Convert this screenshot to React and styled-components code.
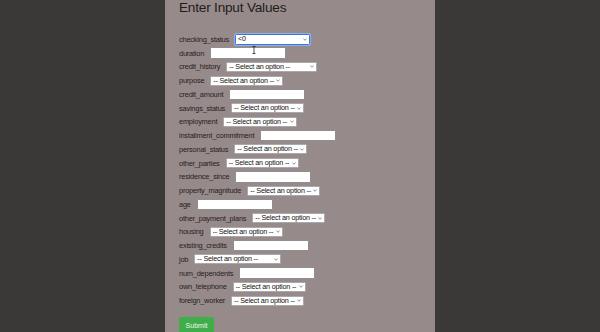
import React from "react";
import styled, { createGlobalStyle } from "styled-components";

const Global = createGlobalStyle`
  html, body { margin: 0; padding: 0; background: #3b3938; }
  body { font-family: "Liberation Sans", Arial, Helvetica, sans-serif; }
  #root { min-height: 332px; }
`;

const Page = styled.div`
  display: flex;
  justify-content: center;
  min-height: 332px;
  background: #3b3938;
`;

const Panel = styled.div`
  width: 270px;
  box-sizing: border-box;
  padding: 0 14px;
  background: #968a8a;
  min-height: 332px;
  display: flex;
  flex-direction: column;
`;

const Title = styled.h1`
  margin: 0;
  font-size: 13.6px;
  line-height: 16px;
  font-weight: 400;
  color: #1f1c1c;
  letter-spacing: -0.2px;
`;

const Form = styled.form`
  display: flex;
  flex-direction: column;
  margin-top: 16.6px;
`;

const Row = styled.div`
  display: flex;
  align-items: center;
  height: 13.76px;
`;

const Label = styled.label`
  font-size: 7.4px;
  letter-spacing: -0.2px;
  color: #262222;
  margin-right: 6px;
  white-space: nowrap;
`;

const Field = styled.span`
  position: relative;
  display: inline-flex;
  align-items: center;
`;

const TextInput = styled.input`
  box-sizing: border-box;
  width: 76px;
  height: 11.5px;
  margin: 0;
  padding: 0 2px;
  border: 1px solid #8f8f8f;
  border-radius: 1px;
  background: #fff;
  font-size: 7px;
  font-family: inherit;
  outline: none;
`;

const Select = styled.select`
  appearance: none;
  -webkit-appearance: none;
  box-sizing: border-box;
  width: ${(p) => p.$w}px;
  height: ${(p) => (p.$focus ? 11 : 10)}px;
  margin: 0;
  padding: 0 6px 0 2px;
  border: 1px solid ${(p) => (p.$focus ? "#3b74d8" : "#a9a9a9")};
  border-radius: 1.5px;
  background: #fff;
  color: #111;
  font-size: 7.2px;
  letter-spacing: -0.2px;
  line-height: 8px;
  font-family: inherit;
  box-shadow: ${(p) => (p.$focus ? "0 0 0 1px #8fb1ea" : "none")};
  outline: none;
`;

const Chevron = styled.svg`
  position: absolute;
  right: 3px;
  top: 50%;
  margin-top: -1.5px;
  width: 4px;
  height: 3px;
  pointer-events: none;
`;

const Cursor = styled.svg`
  position: absolute;
  left: 42px;
  top: -1px;
  width: 4px;
  height: 8px;
  pointer-events: none;
`;

const SubmitButton = styled.button`
  align-self: flex-start;
  margin-top: 9px;
  width: 35px;
  height: 17px;
  border: none;
  border-radius: 2px;
  background: #3fae49;
  color: #eef7ee;
  font-size: 7px;
  font-family: inherit;
  padding: 0;
`;

const fields = [
  { name: "checking_status", type: "select", w: 75, value: "<0", focus: true },
  { name: "duration", type: "input", cursor: true },
  { name: "credit_history", type: "select", w: 91 },
  { name: "purpose", type: "select", w: 73 },
  { name: "credit_amount", type: "input" },
  { name: "savings_status", type: "select", w: 73 },
  { name: "employment", type: "select", w: 74 },
  { name: "installment_commitment", type: "input" },
  { name: "personal_status", type: "select", w: 73 },
  { name: "other_parties", type: "select", w: 73 },
  { name: "residence_since", type: "input" },
  { name: "property_magnitude", type: "select", w: 73 },
  { name: "age", type: "input" },
  { name: "other_payment_plans", type: "select", w: 73 },
  { name: "housing", type: "select", w: 73 },
  { name: "existing_credits", type: "input" },
  { name: "job", type: "select", w: 87 },
  { name: "num_dependents", type: "input" },
  { name: "own_telephone", type: "select", w: 73 },
  { name: "foreign_worker", type: "select", w: 73 },
];

function Control({ f }) {
  if (f.type === "input") {
    return (
      <Field>
        <TextInput id={f.name} type="text" />
        {f.cursor && (
          <Cursor viewBox="0 0 4 8">
            <path d="M0.5 0.5 H3.5 M2 0.5 V7.5 M0.5 7.5 H3.5" stroke="#222" strokeWidth="0.8" fill="none" />
          </Cursor>
        )}
      </Field>
    );
  }
  return (
    <Field>
      <Select id={f.name} $w={f.w} $focus={f.focus} defaultValue={f.value ? "a" : ""}>
        {f.value ? <option value="a">{f.value}</option> : <option value="">-- Select an option --</option>}
      </Select>
      <Chevron viewBox="0 0 4 3">
        <path d="M0.4 0.5 L2 2.3 L3.6 0.5" stroke="#666" strokeWidth="0.7" fill="none" />
      </Chevron>
    </Field>
  );
}

export default function App() {
  return (
    <>
      <Global />
      <Page>
        <Panel>
          <Title>Enter Input Values</Title>
          <Form onSubmit={(e) => e.preventDefault()}>
            {fields.map((f) => (
              <Row key={f.name}>
                <Label htmlFor={f.name}>{f.name}</Label>
                <Control f={f} />
              </Row>
            ))}
            <SubmitButton type="submit">Submit</SubmitButton>
          </Form>
        </Panel>
      </Page>
    </>
  );
}
